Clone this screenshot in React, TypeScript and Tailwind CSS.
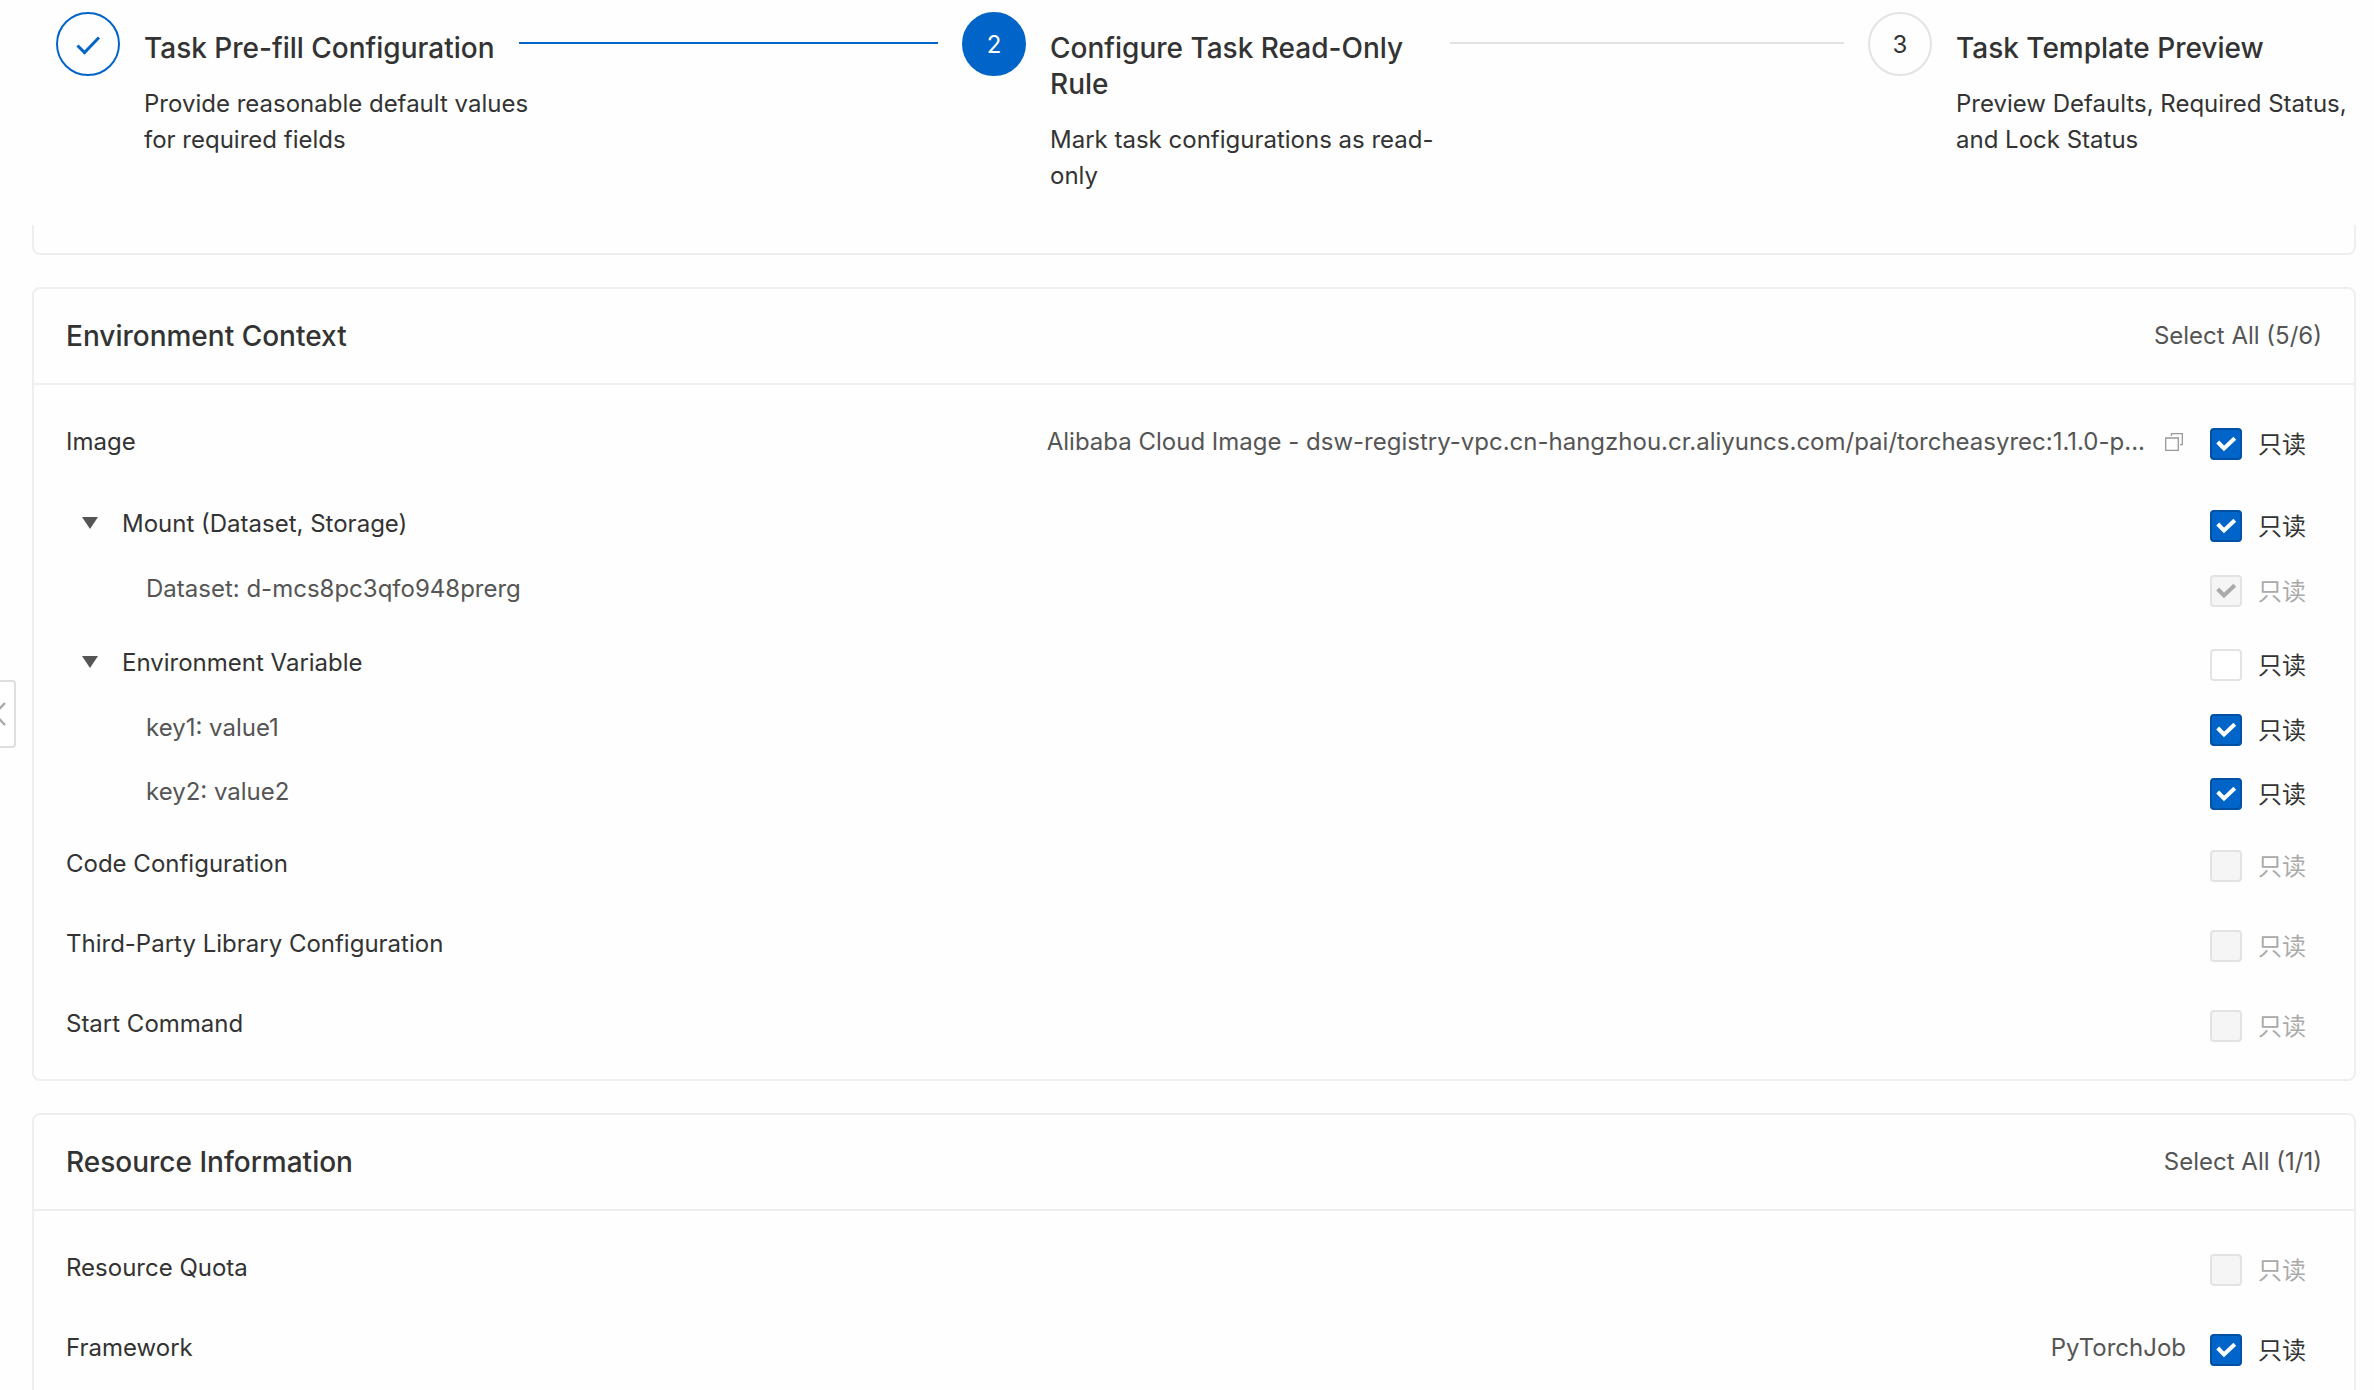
import { useState } from "react";

type StepState = "done" | "active" | "todo";

type Step = { title: string; description: string; state: StepState };

type Item = {
  id: string;
  label: string;
  checked?: boolean;
  disabled?: boolean;
  value?: string;
  copyable?: boolean;
  children?: Item[];
};

const steps: Step[] = [
  {
    title: "Task Pre-fill Configuration",
    description: "Provide reasonable default values for required fields",
    state: "done",
  },
  {
    title: "Configure Task Read-Only Rule",
    description: "Mark task configurations as read-only",
    state: "active",
  },
  {
    title: "Task Template Preview",
    description: "Preview Defaults, Required Status, and Lock Status",
    state: "todo",
  },
];

const environmentItems: Item[] = [
  {
    id: "image",
    label: "Image",
    checked: true,
    copyable: true,
    value:
      "Alibaba Cloud Image - dsw-registry-vpc.cn-hangzhou.cr.aliyuncs.com/pai/torcheasyrec:1.1.0-p...",
  },
  {
    id: "mount",
    label: "Mount (Dataset, Storage)",
    checked: true,
    children: [
      { id: "dataset", label: "Dataset: d-mcs8pc3qfo948prerg", checked: true, disabled: true },
    ],
  },
  {
    id: "env",
    label: "Environment Variable",
    children: [
      { id: "key1", label: "key1: value1", checked: true },
      { id: "key2", label: "key2: value2", checked: true },
    ],
  },
  { id: "code", label: "Code Configuration", disabled: true },
  { id: "library", label: "Third-Party Library Configuration", disabled: true },
  { id: "command", label: "Start Command", disabled: true },
];

const resourceItems: Item[] = [
  { id: "quota", label: "Resource Quota", disabled: true },
  { id: "framework", label: "Framework", checked: true, value: "PyTorchJob" },
];

const circleStyles: Record<StepState, string> = {
  done: "border-[#0064c8] text-[#0064c8]",
  active: "border-[#0064c8] bg-[#0064c8] text-white",
  todo: "border-[#e3e3e3] text-[#333]",
};

function StepMarker({ state, index }: { state: StepState; index: number }) {
  return (
    <span
      className={`flex size-16 shrink-0 items-center justify-center rounded-full border-2 pt-0.5 ${circleStyles[state]}`}
    >
      {state === "done" ? (
        <svg viewBox="0 0 24 20" className="h-5 w-6" fill="none" stroke="currentColor" strokeWidth="3">
          <path d="M1.5 10.5 8.5 17.5 23 2.5" />
        </svg>
      ) : (
        index + 1
      )}
    </span>
  );
}

function Stepper() {
  return (
    <ol className="grid shrink-0 grid-cols-[1fr_1fr_auto] pt-3 pr-[18px] pb-[31px] pl-14">
      {steps.map((step, index) => (
        <li key={step.title} className="flex gap-6" aria-current={step.state === "active" ? "step" : undefined}>
          <StepMarker state={step.state} index={index} />
          <div className="min-w-0 flex-1 pt-[18px]">
            <div className="flex gap-6">
              <h2 className="max-w-[376px] text-[28px] leading-9 font-medium">{step.title}</h2>
              {index < steps.length - 1 && (
                <span
                  className={`mt-3 mr-6 h-0.5 flex-1 ${step.state === "done" ? "bg-[#0064c8]" : "bg-[#e3e3e3]"}`}
                />
              )}
            </div>
            <p className="mt-5 w-[400px]">{step.description}</p>
          </div>
        </li>
      ))}
    </ol>
  );
}

function ReadOnlyBox({ item }: { item: Item }) {
  const [checked, setChecked] = useState(Boolean(item.checked));
  const boxStyle = item.disabled
    ? "border-[#e3e3e3] bg-[#f5f5f5]"
    : "border-[#e3e3e3] bg-white checked:border-[#0050a4] checked:bg-[#0064c8]";
  return (
    <label
      className={`flex shrink-0 items-center gap-4 pt-1 pr-4 ${item.disabled ? "text-[#aaa]" : "text-[#333]"}`}
    >
      <span className={`grid size-8 ${item.disabled ? "text-[#aaa]" : "text-white"}`}>
        <input
          type="checkbox"
          id={item.id}
          checked={checked}
          disabled={item.disabled}
          onChange={(event) => setChecked(event.target.checked)}
          className={`col-start-1 row-start-1 size-8 appearance-none rounded-sm border-2 ${boxStyle}`}
        />
        {checked && (
          <svg
            viewBox="0 0 32 32"
            className="pointer-events-none col-start-1 row-start-1 size-8"
            fill="none"
            stroke="currentColor"
            strokeWidth="4"
          >
            <path d="M7.7 14 14 20.5 24.8 10.3" />
          </svg>
        )}
      </span>
      <span className="pt-0.5">只读</span>
    </label>
  );
}

function CopyButton() {
  return (
    <button type="button" aria-label="Copy" className="mr-[3px] ml-5 size-[18px] shrink-0 text-[#999]">
      <svg viewBox="0 0 18 18" className="size-[18px]" fill="none" stroke="currentColor" strokeWidth="1.3">
        <path d="M.7 5h12.6v12.3H.7zM6.5 3V.7h10.8v11h-2.3" />
      </svg>
    </button>
  );
}

function Row({ item }: { item: Item }) {
  return (
    <div className="flex h-20 items-center">
      <label htmlFor={item.id} className="flex-1">
        {item.label}
      </label>
      {item.value && <span className="truncate text-[#555]">{item.value}</span>}
      {item.copyable && <CopyButton />}
      <div className="ml-6 shrink-0">
        <ReadOnlyBox item={item} />
      </div>
    </div>
  );
}

function TreeRow({ item }: { item: Item }) {
  const [open, setOpen] = useState(true);
  return (
    <div className="pt-[9px]">
      <div className="flex h-[66px] items-center justify-between">
        <button type="button" aria-expanded={open} onClick={() => setOpen(!open)} className="flex items-center gap-6 pl-4">
          <svg viewBox="0 0 16 16" className="size-4 fill-[#555]">
            <path d="M0 1h16L8 13z" />
          </svg>
          <span>{item.label}</span>
        </button>
        <ReadOnlyBox item={item} />
      </div>
      {open &&
        item.children?.map((child) => (
          <div key={child.id} className="flex h-16 items-center justify-between pl-20">
            <label htmlFor={child.id} className="text-[#555]">
              {child.label}
            </label>
            <ReadOnlyBox item={child} />
          </div>
        ))}
    </div>
  );
}

function Card({ title, count, items }: { title: string; count: string; items: Item[] }) {
  return (
    <section className="shrink-0 rounded-lg border-2 border-[#efefef]">
      <header className="flex h-24 items-center justify-between border-b-2 border-[#efefef] px-8">
        <h2 className="text-[28px] leading-9 font-medium">{title}</h2>
        <button type="button" className="text-[#555]">
          Select All ({count})
        </button>
      </header>
      <div className="px-8 pt-[17px] pb-[15px]">
        {items.map((item) =>
          item.children ? <TreeRow key={item.id} item={item} /> : <Row key={item.id} item={item} />,
        )}
      </div>
    </section>
  );
}

export default function App() {
  return (
    <div className="relative flex h-screen flex-col overflow-hidden bg-[#fefefe] font-['Inter','Noto_Sans_CJK_SC',sans-serif] text-2xl leading-9 text-[#333]">
      <Stepper />
      <main className="flex min-h-0 flex-1 flex-col gap-8 overflow-hidden pr-[18px] pl-8">
        <section className="shrink-0 rounded-b-lg border-2 border-t-0 border-[#efefef] pb-7" />
        <Card title="Environment Context" count="5/6" items={environmentItems} />
        <Card title="Resource Information" count="1/1" items={resourceItems} />
      </main>
      <button
        type="button"
        aria-label="Collapse panel"
        className="absolute top-[680px] left-0 flex h-[68px] w-4 items-center rounded-r-sm border-2 border-l-0 border-[#dedede] bg-white text-[#aaa]"
      >
        <svg viewBox="0 0 8 24" className="h-6 w-2" fill="none" stroke="currentColor" strokeWidth="2.5">
          <path d="M5 1-5.5 12 5 23" />
        </svg>
      </button>
    </div>
  );
}
